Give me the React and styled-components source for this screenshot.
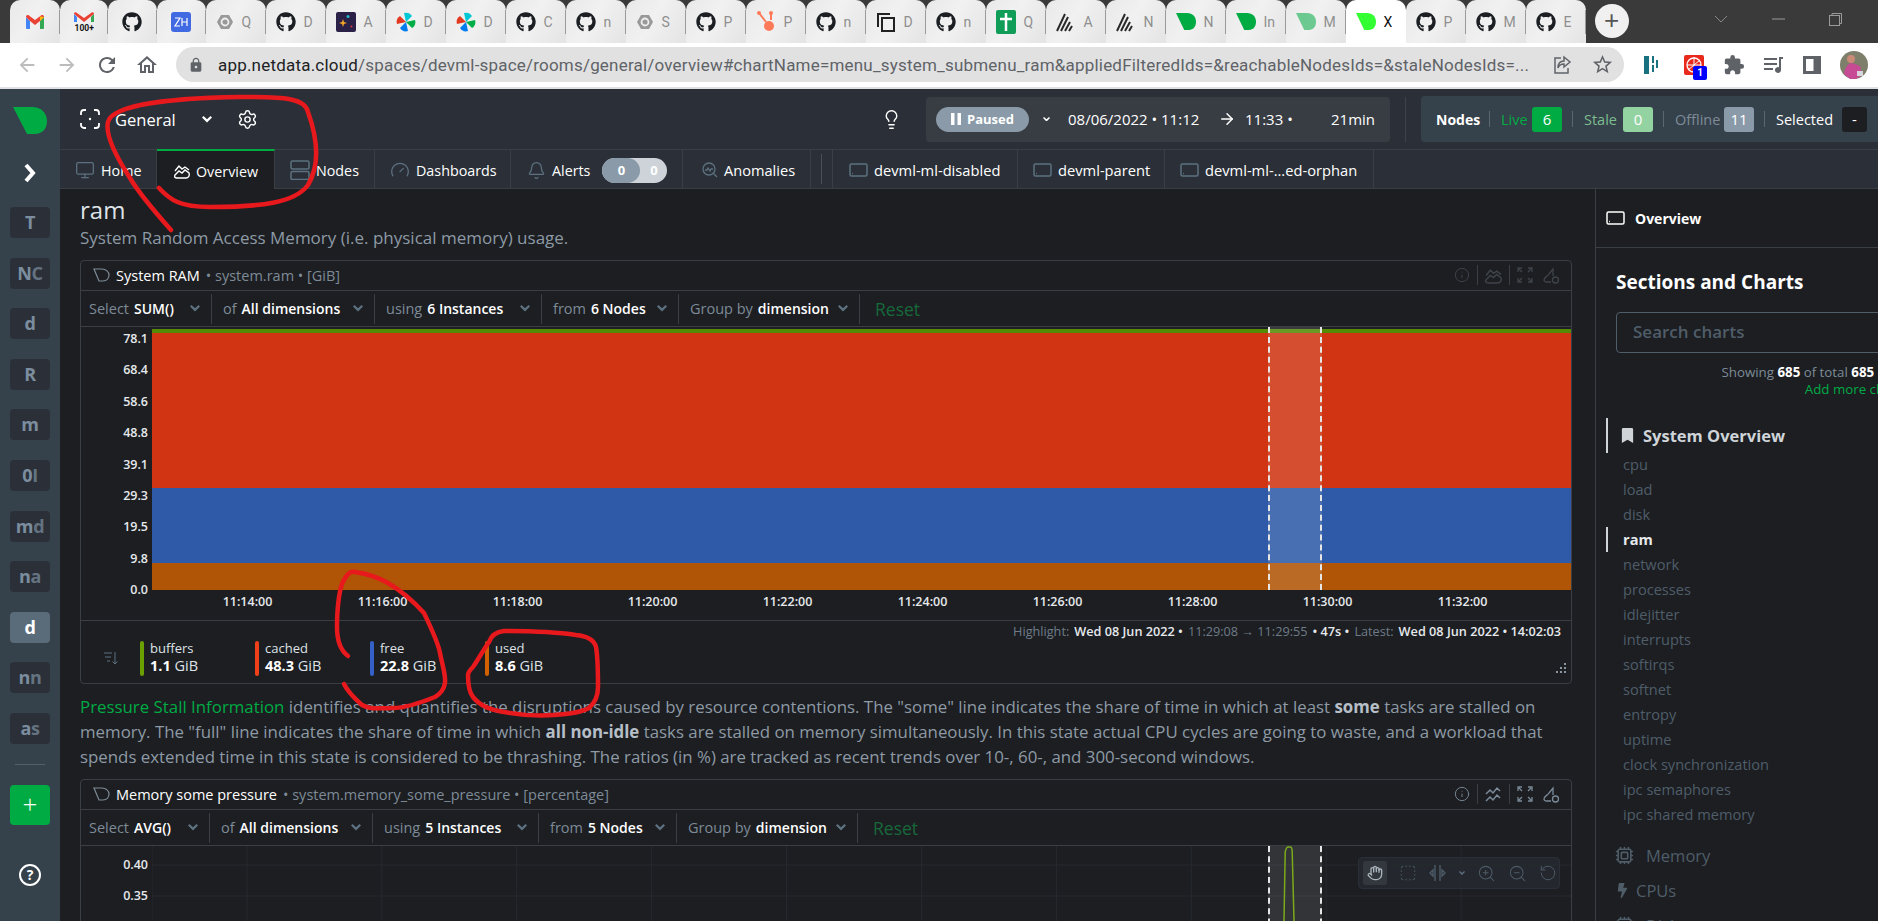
import React from 'react';
import styled, { createGlobalStyle } from 'styled-components';
import { FaGithub, FaBolt, FaBookmark } from 'react-icons/fa';
import { MdArrowBack, MdArrowForward, MdRefresh, MdOutlineHome, MdLock, MdStarBorder, MdExtension } from 'react-icons/md';
import { Monitor, Gauge, Bell, Cpu, Info, ZoomIn, ZoomOut, RotateCcw, Hand, SquareDashed, Settings, Lightbulb, ArrowRight } from 'lucide-react';

const Global = createGlobalStyle`
  html, body { margin: 0; padding: 0; background: #1c1e22; overflow: hidden; }
  * { box-sizing: border-box; }
  body { font-family: "Open Sans", "Liberation Sans", sans-serif; }
`;

const Page = styled.div`
  position: relative;
  width: 100%;
  height: 921px;
  overflow: hidden;
  display: flex;
  flex-direction: column;
`;

/* browser chrome */
const TabStrip = styled.div`
  height: 43px;
  background: #3a3a3a;
  padding-left: 10px;
  display: flex;
  flex-shrink: 0;
`;

const Tab = styled.div`
  width: ${p => p.$w}px;
  height: 43px;
  position: relative;
  border-radius: 10px 10px 0 0;
  background: ${p => (p.$active ? '#ffffff' : 'linear-gradient(120deg, #e9e9e9, #f1f1f1 45%, #e4e4e4)')};
  display: flex;
  align-items: center;
  justify-content: ${p => (p.$small ? 'center' : 'flex-start')};
  padding-left: ${p => (p.$small ? 0 : 10)}px;
  gap: 8px;
  &::after {
    content: '';
    display: ${p => (p.$active ? 'none' : 'block')};
    position: absolute;
    right: 0;
    top: 10px;
    bottom: 9px;
    width: 1px;
    background: #9a9a9a;
  }
`;

const TabLetter = styled.span`
  font-size: 14px;
  color: ${p => (p.$dark ? '#111' : '#8f8f8f')};
  font-family: Roboto, sans-serif;
`;

const NewTab = styled.div`
  width: 34px;
  height: 34px;
  margin: 4px 0 0 9px;
  border-radius: 50%;
  background: #f0f0f0;
  color: #555;
  font-size: 26px;
  line-height: 32px;
  text-align: center;
  font-family: "Liberation Sans", sans-serif;
`;

const WinControls = styled.div`
  margin-left: auto;
  display: flex;
  align-items: center;
  gap: 44px;
  height: 38px;
  padding-right: 36px;
`;

const Toolbar = styled.div`
  height: 46px;
  background: #fff;
  display: flex;
  align-items: center;
  padding: 0 0 1px 7px;
  color: #5f6368;
  flex-shrink: 0;
  border-bottom: 2px solid #dfe1e5;
`;

const NavBtn = styled.div`
  width: 40px;
  display: flex;
  justify-content: center;
  color: ${p => (p.$off ? '#bcbcbc' : '#5f6368')};
  flex-shrink: 0;
`;

const UrlPill = styled.div`
  width: 1448px;
  height: 35px;
  margin-left: 9px;
  border-radius: 18px;
  background: #e1e1e1;
  display: flex;
  align-items: center;
  padding-left: 12px;
  color: #5f6368;
  flex-shrink: 0;
`;

const UrlText = styled.div`
  margin: 0 25px 0 14px;
  width: 1310px;
  white-space: nowrap;
  overflow: hidden;
  font-family: Roboto, sans-serif;
  font-size: 17px;
  letter-spacing: 0.2px;
  color: #5f6368;
  b { font-weight: 400; color: #202124; }
`;

const ExtRow = styled.div`
  display: flex;
  align-items: center;
  flex: 1;
  padding-left: 20px;
  gap: 19px;
`;

const ExtBadge = styled.span`
  position: absolute;
  right: -3px;
  bottom: -5px;
  width: 14px;
  height: 14px;
  background: #0000ff;
  color: #fff;
  font: 700 10px/14px Roboto, sans-serif;
  text-align: center;
  border-radius: 2px;
`;

const ExtWrap = styled.div`
  position: relative;
  width: 20px;
  height: 20px;
  margin-left: 7px;
`;

/* netdata shell */
const Body = styled.div`
  flex: 1;
  display: flex;
  min-height: 0;
`;

const Rail = styled.nav`
  width: 60px;
  background: #35414b;
  display: flex;
  flex-direction: column;
  align-items: center;
  flex-shrink: 0;
  padding-top: 18px;
`;

const Chevron = styled.div`
  margin: 28px 0 23px;
  height: 22px;
`;

const RailTiles = styled.div`
  display: flex;
  flex-direction: column;
  gap: 19.6px;
`;

const RailTile = styled.div`
  width: 40px;
  height: 31px;
  border-radius: 4px;
  background: ${p => (p.$active ? '#5a6b7a' : '#2b3038')};
  color: ${p => (p.$active ? '#fff' : '#7b8d9e')};
  font-weight: 700;
  font-size: 18px;
  line-height: 30px;
  text-align: center;
  letter-spacing: -0.3px;
  i { font-style: normal; opacity: 0.72; }
`;

const RailRule = styled.div`
  width: 30px;
  height: 1px;
  background: #52606c;
  margin: 20px 0;
`;

const AddTile = styled.div`
  width: 40px;
  height: 40px;
  border-radius: 4px;
  background: #00ab44;
  color: #fff;
  font-size: 26px;
  font-weight: 300;
  line-height: 38px;
  text-align: center;
`;

const HelpMark = styled.div`
  margin-top: 39px;
  width: 22px;
  height: 22px;
  border-radius: 50%;
  border: 2px solid #fff;
  color: #fff;
  font-size: 14px;
  font-weight: 700;
  line-height: 18px;
  text-align: center;
`;

const Shell = styled.div`
  flex: 1;
  min-width: 0;
  display: flex;
  flex-direction: column;
`;

const TopBar = styled.header`
  height: 60px;
  background: #2b3038;
  display: flex;
  align-items: center;
  padding-left: 20px;
  color: #fff;
  flex-shrink: 0;
`;

const RoomName = styled.span`
  font-size: 16.5px;
  margin-left: 15px;
  width: 87px;
`;

const GearSlot = styled.span`
  margin-left: 25px;
  display: flex;
`;

const BulbSlot = styled.span`
  margin: 0 24px 0 auto;
  display: flex;
`;

const TimeBox = styled.div`
  width: 464px;
  height: 45px;
  background: #383c43;
  border-radius: 4px;
  display: flex;
  align-items: center;
  padding-left: 10px;
  font-size: 15px;
  color: #fff;
  flex-shrink: 0;
`;

const PausedPill = styled.div`
  width: 93px;
  height: 25px;
  border-radius: 13px;
  background: #8a9aa8;
  display: flex;
  align-items: center;
  justify-content: center;
  gap: 6px;
  font-size: 13px;
  font-weight: 700;
  color: #fff;
`;

const PausedCaret = styled.span`
  margin: 0 18px 0 14px;
  display: flex;
`;

const TimeText = styled.span`
  width: ${p => p.$w}px;
  white-space: nowrap;
  display: flex;
  align-items: center;
`;

const VRule = styled.div`
  width: 1px;
  height: 45px;
  background: #3d434b;
  margin: 0 15px;
  flex-shrink: 0;
`;

const NodesBox = styled.div`
  width: 457px;
  flex-shrink: 0;
  height: 46px;
  background: #35414b;
  border-radius: 4px 0 0 4px;
  display: flex;
  align-items: center;
`;

const NodeGroup = styled.div`
  width: ${p => p.$w}px;
  height: 16px;
  padding: 0 10px 0 ${p => p.$pl || 11}px;
  display: flex;
  align-items: center;
  justify-content: space-between;
  border-right: ${p => (p.$last ? 'none' : '1px solid #5a6672')};
  font-size: ${p => (p.$bold ? 14 : 14.5)}px;
  font-weight: ${p => (p.$bold ? 700 : 400)};
  color: ${p => p.$color || '#fff'};
`;

const NodeCount = styled.span`
  width: ${p => p.$w || 30}px;
  height: 25px;
  border-radius: 3px;
  background: ${p => p.$bg};
  color: #fff;
  font-size: 15px;
  line-height: 24px;
  text-align: center;
  flex-shrink: 0;
`;

const TabBar = styled.div`
  height: 40px;
  background: #2b3038;
  display: flex;
  border-top: 1px solid #3a3f46;
  border-bottom: 1px solid #3a3f46;
  flex-shrink: 0;
`;

const TabItem = styled.div`
  width: ${p => p.$w}px;
  padding: 2px 0 0 ${p => p.$pl || 15}px;
  display: flex;
  align-items: center;
  gap: 6px;
  color: #fff;
  font-size: ${p => p.$fs || 14.3}px;
  white-space: nowrap;
  border-right: 1px solid #3a3f46;
  background: ${p => (p.$active ? '#1c1e22' : 'transparent')};
  border-top: ${p => (p.$active ? '2px solid #00ab44' : 'none')};
  margin-top: ${p => (p.$active ? '-1px' : 0)};
  margin-bottom: ${p => (p.$active ? '-1px' : 0)};
  svg { color: ${p => (p.$active ? '#fff' : '#5d7180')}; flex-shrink: 0; }
`;

const AlertToggle = styled.div`
  margin-left: 6px;
  width: 65px;
  height: 25px;
  border-radius: 13px;
  background: #cdd3d9;
  display: flex;
  font-size: 13px;
  font-weight: 700;
  color: #fff;
`;

const AlertSide = styled.span`
  width: ${p => p.$w}px;
  border-radius: 13px;
  background: ${p => p.$bg || 'transparent'};
  text-align: center;
  line-height: 24px;
`;

const TabDivider = styled.div`
  width: 22px;
  display: flex;
  align-items: center;
  justify-content: center;
  border-right: 1px solid #3a3f46;
  &::before {
    content: '';
    width: 1px;
    height: 30px;
    background: #4a5058;
  }
`;

const Split = styled.div`
  flex: 1;
  min-height: 0;
  display: flex;
`;

const Main = styled.main`
  flex: 1;
  min-width: 0;
  background: #1c1e22;
  padding: 5px 23px 0 20px;
  overflow: hidden;
`;

const SectionTitle = styled.h2`
  margin: 0;
  font-size: 24px;
  line-height: 32px;
  font-weight: 400;
  color: #dfe3e7;
`;

const SectionDesc = styled.p`
  margin: 0 0 10px;
  font-size: 17px;
  line-height: 24px;
  color: #8e9aa5;
`;

const Card = styled.section`
  border: 1px solid #3a3f46;
  border-radius: 4px;
  flex-shrink: 0;
`;

const CardHead = styled.div`
  height: 30px;
  display: flex;
  align-items: center;
  padding: 0 11px 1px 12px;
  border-bottom: 1px solid #3a3f46;
  font-size: 14.5px;
  color: #fff;
  gap: 6px;
`;

const CardMeta = styled.span`
  color: #7e8b97;
  font-size: 14.5px;
`;

const HeadTools = styled.div`
  margin-left: auto;
  display: flex;
  align-items: center;
  gap: 7px;
  color: ${p => (p.$dim ? '#3f444b' : '#7a8a98')};
  svg:last-child { margin-left: 3px; }
`;

const ToolRule = styled.span`
  width: 1px;
  height: 20px;
  background: #3a3f46;
`;

const FilterRow = styled.div`
  height: 36px;
  display: flex;
  align-items: center;
  border-bottom: 1px solid #3a3f46;
`;

const Filter = styled.div`
  width: ${p => p.$w}px;
  height: 30px;
  padding-left: ${p => p.$pl || 11}px;
  display: flex;
  align-items: center;
  gap: 5px;
  border-right: 1px solid #3a3f46;
  font-size: 14.5px;
  color: #7e8b97;
  white-space: nowrap;
  b { color: #fff; font-weight: 600; font-size: 14px; }
  svg { color: #5d7180; margin-left: auto; margin-right: 11px; }
`;

const ResetLink = styled.span`
  margin-left: 15px;
  font-size: 17.5px;
  color: #17693a;
`;

const PlotRow = styled.div`
  display: flex;
  height: ${p => p.$h}px;
  position: relative;
`;

const YAxis = styled.div`
  width: 71px;
  height: ${p => p.$h}px;
  margin-top: ${p => p.$top}px;
  padding-right: 4px;
  display: flex;
  flex-direction: column;
  justify-content: space-between;
  align-items: flex-end;
  font-size: 12.5px;
  line-height: 16px;
  font-weight: 600;
  color: #e6e9ec;
  flex-shrink: 0;
`;

const Stack = styled.div`
  flex: 1;
  padding-top: 2px;
  display: flex;
  flex-direction: column;
`;

const Layer = styled.div`
  height: ${p => p.$h}px;
  background: ${p => p.$c};
`;

const HighlightBand = styled.div`
  position: absolute;
  top: 0;
  bottom: 0;
  left: 1187px;
  width: 54px;
  background: rgba(255, 255, 255, ${p => p.$a});
  border-left: 2px dashed #e6e6e6;
  border-right: 2px dashed #e6e6e6;
`;

const XAxis = styled.div`
  height: 31px;
  padding: 4px 0 0 99px;
  display: flex;
  border-bottom: 1px solid #3a3f46;
`;

const XTick = styled.span`
  width: 135px;
  text-align: center;
  font-size: 12.5px;
  font-weight: 600;
  color: #e6e9ec;
  line-height: 16px;
`;

const CardFoot = styled.div`
  height: 62px;
  position: relative;
`;

const HighlightLine = styled.div`
  height: 19px;
  padding-right: 10px;
  display: flex;
  justify-content: flex-end;
  align-items: center;
  gap: 5px;
  font-size: 12.7px;
  color: #e6e9ec;
  white-space: nowrap;
  font-weight: 600;
  span { color: #6f7c88; font-weight: 400; }
`;

const Legend = styled.div`
  display: flex;
  align-items: center;
  padding-left: 23px;
  height: 36px;
  color: #5d7180;
`;

const LegendItem = styled.div`
  width: 115px;
  display: flex;
  gap: 4px;
  height: 35px;
  line-height: 17px;
  color: #dfe3e7;
  &:first-of-type { margin-left: 21px; }
`;

const LegendText = styled.div`
  margin: -1px 0 0 2px;
  font-size: 13px;
  b { font-weight: 700; color: #fff; }
`;

const LegendValue = styled.span`
  font-size: 14.5px;
`;

const LegendBar = styled.span`
  width: 4px;
  border-radius: 2px;
  background: ${p => p.$c};
`;

const ResizeDots = styled.div`
  position: absolute;
  right: 4px;
  bottom: 4px;
  color: #8a96a1;
`;

const Paragraph = styled.p`
  margin: 10px 0;
  font-size: 16.85px;
  line-height: 25px;
  color: #8e9aa5;
  a { color: #00ab44; }
  b { color: #b6bfc7; }
`;

const ChartTools = styled.div`
  position: absolute;
  top: 11px;
  right: 11px;
  width: 202px;
  height: 32px;
  border: 1px solid #2b3038;
  border-radius: 4px;
  background: rgba(38, 42, 48, 0.85);
  display: flex;
  align-items: center;
  gap: 12px;
  padding-left: 4px;
  color: #4c5a66;
`;

const HandTile = styled.span`
  width: 24px;
  height: 24px;
  border-radius: 3px;
  background: #33383f;
  color: #aab4bc;
  display: flex;
  align-items: center;
  justify-content: center;
`;

/* right panel */
const Side = styled.aside`
  width: 283px;
  flex-shrink: 0;
  background: #1c1e22;
  border-left: 1px solid #3a3f46;
  overflow: hidden;
`;

const SideHead = styled.div`
  height: 59px;
  padding: 0 0 0 10px;
  display: flex;
  align-items: center;
  gap: 10px;
  border-bottom: 1px solid #3a3f46;
  font-size: 14px;
  font-weight: 700;
  color: #fff;
`;

const SideBody = styled.div`
  width: 320px;
  padding: 21px 0 0 20px;
`;

const SideTitle = styled.h3`
  margin: 0 0 17px;
  font-size: 19px;
  line-height: 26px;
  font-weight: 700;
  color: #fff;
`;

const Search = styled.div`
  height: 41px;
  border: 1px solid #4f5d69;
  border-radius: 4px;
  padding: 0 16px;
  font-size: 17px;
  font-weight: 600;
  line-height: 38px;
  color: #4f5d69;
`;

const CountLine = styled.div`
  margin-top: 11px;
  font-size: 13.3px;
  line-height: 17px;
  text-align: right;
  color: #7e8b97;
  white-space: nowrap;
  b { color: #fff; }
`;

const AddMore = styled(CountLine)`
  margin-top: 0;
  padding-right: 8px;
  color: #00ab44;
`;

const NavGroup = styled.div`
  margin: 20px 0 -1px -10px;
  height: 35px;
  border-left: 2px solid #cfd4d9;
  padding-left: 12px;
  display: flex;
  align-items: center;
  gap: 8px;
  font-size: 16.5px;
  font-weight: 700;
  color: #cfd4d9;
`;

const NavList = styled.ul`
  list-style: none;
  margin: 0 0 0 -10px;
  padding: 0;
`;

const NavItem = styled.li`
  height: 25px;
  line-height: 24px;
  padding-left: ${p => (p.$active ? 15 : 17)}px;
  font-size: 14.6px;
  color: ${p => (p.$active ? '#e6e9ec' : '#4f5d69')};
  font-weight: ${p => (p.$active ? 700 : 400)};
  border-left: ${p => (p.$active ? '2px solid #cfd4d9' : 'none')};
`;

const NavSection = styled.div`
  height: 35px;
  margin-top: ${p => p.$mt || 0}px;
  margin-left: -1px;
  display: flex;
  align-items: center;
  gap: ${p => p.$gap || 12}px;
  font-size: 16.5px;
  color: #4f5d69;
`;

const Scribbles = styled.svg`
  position: absolute;
  inset: 0;
  pointer-events: none;
`;

const GmailIcon = () => (
  <svg width="18" height="14" viewBox="0 0 18 14">
    <path d="M0 2v11a1 1 0 0 0 1 1h3V6z" fill="#4285f4" />
    <path d="M18 2v11a1 1 0 0 1-1 1h-3V6z" fill="#34a853" />
    <path d="M0 2l4 4 5 4 5-4 4-4c0-2-2-2.500-3-1.500L9 5 3 .5C2-.5 0 0 0 2z" fill="#ea4335" />
    <path d="M14 1.500l4 .5-4 4z" fill="#fbbc04" />
  </svg>
);

const Gmail100 = () => (
  <svg width="20" height="20" viewBox="0 0 20 20">
    <path d="M0 2l10 8 10-8c0-2-2-2-3-1l-7 5-7-5C2 0 0 0 0 2z" fill="#ea4335" />
    <path d="M0 2v8h3V5z" fill="#4285f4" />
    <path d="M20 2v8h-3V5z" fill="#34a853" />
    <text x="0.500" y="19" fontSize="8.500" fontWeight="700" fontFamily="Roboto" fill="#111">100+</text>
  </svg>
);

const ZhIcon = () => (
  <svg width="20" height="20" viewBox="0 0 20 20">
    <rect width="20" height="20" rx="3" fill="#4169e1" />
    <path d="M4 6h5L4 14h5M11 6v8M16 6v8M11 10h5" stroke="#fff" strokeWidth="1.200" fill="none" />
  </svg>
);

const HexIcon = () => (
  <svg width="18" height="18" viewBox="0 0 18 18">
    <path d="M5 2h8l4 7-4 7H5L1 9z" fill="#999" />
    <circle cx="9" cy="9" r="3.500" fill="none" stroke="#eee" strokeWidth="1.800" />
  </svg>
);

const StarIcon = () => (
  <svg width="20" height="20" viewBox="0 0 20 20">
    <rect width="20" height="20" rx="2" fill="#2b2148" />
    <path d="M7 7l1 3 3 1-3 1-1 3-1-3-3-1 3-1z" fill="#f5a623" />
    <circle cx="12" cy="4.500" r="1.500" fill="#29b6c6" />
    <circle cx="15.500" cy="14.500" r="1" fill="#e53935" />
  </svg>
);

const PinwheelIcon = () => (
  <svg width="20" height="20" viewBox="0 0 20 20">
    <path d="M10 10L8 1q5-1.500 8 3z" fill="#00c7d4" />
    <path d="M10 10L8 1q5-1.500 8 3z" fill="#00ad46" transform="rotate(90 10 10)" />
    <path d="M10 10L8 1q5-1.500 8 3z" fill="#017cee" transform="rotate(180 10 10)" />
    <path d="M10 10L8 1q5-1.500 8 3z" fill="#e43921" transform="rotate(270 10 10)" />
  </svg>
);

const HubspotIcon = () => (
  <svg width="20" height="22" viewBox="0 0 20 22">
    <path d="M3 2l7 9M15 2v7" stroke="#ff7a59" strokeWidth="2" />
    <circle cx="13" cy="15" r="5" fill="#ff7a59" />
    <circle cx="3" cy="2" r="2" fill="#ff7a59" />
    <circle cx="15" cy="2" r="2" fill="#ff7a59" />
  </svg>
);

const CopyIcon = () => (
  <svg width="20" height="20" viewBox="0 0 20 20" fill="none" stroke="#222" strokeWidth="2">
    <path d="M2 15V2h12" />
    <rect x="6" y="6" width="12" height="13" />
  </svg>
);

const SheetIcon = () => (
  <svg width="20" height="24" viewBox="0 0 20 24">
    <rect width="20" height="24" rx="2" fill="#0f9d58" />
    <path d="M10 3v18M4 9h12" stroke="#fff" strokeWidth="2.500" />
  </svg>
);

const SigmaIcon = () => (
  <svg width="20" height="20" viewBox="0 0 20 20" fill="none" stroke="#2a2a2a" strokeWidth="2">
    <path d="M1 19L9 2M5 19l7-14M9 19l5-9M13 19l3-5" />
  </svg>
);

const NetdataLogo = ({ w = 20, h = 17, c = '#00ab44', o = 1 }) => (
  <svg width={w} height={h} viewBox="0 0 34 27" preserveAspectRatio="none" opacity={o}>
    <path d="M0 0h19c9 0 15 6 15 14s-5 13-12 13h-8z" fill={c} />
  </svg>
);

const ChartLogo = () => (
  <svg width="17" height="14" viewBox="0 0 17 14" fill="none" stroke="#7e8b97" strokeWidth="1.200">
    <path d="M1 1h8c4 0 7 3 7 6s-2 6-6 6H6z" />
  </svg>
);

const ServerIcon = () => (
  <svg width="20" height="20" viewBox="0 0 20 20" fill="none" stroke="currentColor" strokeWidth="1.500">
    <rect x="1" y="1" width="18" height="8" rx="1.500" />
    <rect x="1" y="11.500" width="18" height="8" rx="1.500" />
  </svg>
);

const OverviewIcon = ({ size = 16 }) => (
  <svg width={size} height={size} viewBox="0 0 16 16" fill="none" stroke="currentColor" strokeWidth="1.400">
    <path d="M1 8l4-5 3 3 3-2 4 3" />
    <path d="M1 12l4-4 3 2 3-3 4 3c1 3-1 5-3 5H3c-2 0-3-1-2-3z" />
  </svg>
);

const ScreenIcon = ({ c = 'currentColor', w = 19 }) => (
  <svg width={w} height={14} viewBox="0 0 19 14" fill="none" stroke={c} strokeWidth="1.500">
    <rect x="1" y="1" width="17" height="12" rx="1.500" />
    <path d="M3 10.500h.8" />
  </svg>
);

const AnomalyIcon = () => (
  <svg width="16" height="16" viewBox="0 0 16 16" fill="none" stroke="currentColor" strokeWidth="1.300">
    <circle cx="7" cy="7" r="6" />
    <path d="M11.500 11.500L15 15M3 8h2l1-2 2 3 1-2h2" />
  </svg>
);

const MiniChevron = ({ c = '#5d7180', s = 10 }) => (
  <svg width={s} height={s * 0.7} viewBox="0 0 10 7" fill={c}>
    <path d="M0 1.500L1.500 0 5 3.200 8.500 0 10 1.500 5 6.500z" />
  </svg>
);

const RoomIcon = () => (
  <svg width="20" height="20" viewBox="0 0 20 20" fill="none" stroke="#fff" strokeWidth="1.800">
    <path d="M6 1H4a3 3 0 0 0-3 3v2M14 1h2a3 3 0 0 1 3 3v2M6 19H4a3 3 0 0 1-3-3v-2M14 19h2a3 3 0 0 0 3-3v-2" />
    <circle cx="10" cy="10" r="1.200" fill="#fff" stroke="none" />
  </svg>
);

const StackIcon = ({ dim }) => (
  dim ? <OverviewIcon size={17} /> : (
    <svg width="17" height="17" viewBox="0 0 17 17" fill="none" stroke="currentColor" strokeWidth="1.500">
      <path d="M1 8l4-4 3 3 4-5 3 3M1 15l4-4 3 3 4-5 3 3" />
    </svg>
  )
);

const FlameAdd = () => (
  <svg width="17" height="17" viewBox="0 0 17 17" fill="none" stroke="currentColor" strokeWidth="1.300">
    <path d="M8 15H3a2 2 0 0 1-2-2c0-3 3-3 5-6l4-5v7" />
    <circle cx="12.500" cy="13" r="3" />
  </svg>
);

const Expand = () => (
  <svg width="16" height="16" viewBox="0 0 16 16" fill="none" stroke="currentColor" strokeWidth="1.300">
    <path d="M1 5V1h4M11 1h4v4M15 11v4h-4M5 15H1v-4M2 2l3 3M14 2l-3 3M14 14l-3-3M2 14l3-3" />
  </svg>
);

const PanIcon = () => (
  <svg width="18" height="18" viewBox="0 0 18 18" fill="none" stroke="currentColor" strokeWidth="1.400">
    <path d="M6 1v16M11 1v16M1 9l3-3v6zM16 9l-3-3v6z" />
  </svg>
);

const tabs = [
  { w: 49.5, small: true, icon: <GmailIcon /> },
  { w: 48.5, small: true, icon: <Gmail100 /> },
  { w: 48.5, small: true, icon: <FaGithub size={20} color="#1b1f23" /> },
  { w: 49, small: true, icon: <ZhIcon /> },
  { w: 60, icon: <HexIcon />, t: 'Q' },
  { w: 60, icon: <FaGithub size={20} color="#1b1f23" />, t: 'D' },
  { w: 60, icon: <StarIcon />, t: 'A' },
  { w: 60, icon: <PinwheelIcon />, t: 'D' },
  { w: 60, icon: <PinwheelIcon />, t: 'D' },
  { w: 60, icon: <FaGithub size={20} color="#1b1f23" />, t: 'C' },
  { w: 60, icon: <FaGithub size={20} color="#1b1f23" />, t: 'n' },
  { w: 60, icon: <HexIcon />, t: 'S' },
  { w: 60, icon: <FaGithub size={20} color="#1b1f23" />, t: 'P' },
  { w: 60, icon: <HubspotIcon />, t: 'P' },
  { w: 60, icon: <FaGithub size={20} color="#1b1f23" />, t: 'n' },
  { w: 60, icon: <CopyIcon />, t: 'D' },
  { w: 60, icon: <FaGithub size={20} color="#1b1f23" />, t: 'n' },
  { w: 60, icon: <SheetIcon />, t: 'Q' },
  { w: 60, icon: <SigmaIcon />, t: 'A' },
  { w: 60, icon: <SigmaIcon />, t: 'N' },
  { w: 60, icon: <NetdataLogo />, t: 'N' },
  { w: 60, icon: <NetdataLogo c="#00ab44" />, t: 'In' },
  { w: 60, icon: <NetdataLogo o={0.55} />, t: 'M' },
  { w: 60, icon: <NetdataLogo c="#33ff33" />, t: 'X', active: true },
  { w: 60, icon: <FaGithub size={20} color="#1b1f23" />, t: 'P' },
  { w: 60, icon: <FaGithub size={20} color="#1b1f23" />, t: 'M' },
  { w: 60, icon: <FaGithub size={20} color="#1b1f23" />, t: 'E' },
];

const railTiles = ['T', 'NC', 'd', 'R', 'm', '0I', 'md', 'na', 'd', 'nn', 'as'];

const navItems = ['cpu', 'load', 'disk', 'ram', 'network', 'processes', 'idlejitter', 'interrupts', 'softirqs', 'softnet', 'entropy', 'uptime', 'clock synchronization', 'ipc semaphores', 'ipc shared memory'];

const xTicks = ['11:14:00', '11:16:00', '11:18:00', '11:20:00', '11:22:00', '11:24:00', '11:26:00', '11:28:00', '11:30:00', '11:32:00'];

const yTicks = ['78.1', '68.4', '58.6', '48.8', '39.1', '29.3', '19.5', '9.8', '0.0'];

const legend = [
  { name: 'buffers', v: '1.1', c: '#6aa000' },
  { name: 'cached', v: '48.3', c: '#f0401a' },
  { name: 'free', v: '22.8', c: '#3560c8' },
  { name: 'used', v: '8.6', c: '#d06000' },
];

const ChartCard = ({ title, meta, dim, widths, filters, children }) => (
  <Card>
    <CardHead>
      <ChartLogo />
      <span>{title}</span>
      <CardMeta>• {meta}</CardMeta>
      <HeadTools $dim={dim}>
        <Info size={16} strokeWidth={1.4} />
        <ToolRule />
        <StackIcon dim={dim} />
        <ToolRule />
        <Expand />
        <FlameAdd />
      </HeadTools>
    </CardHead>
    <FilterRow>
      {filters.map((f, i) => (
        <Filter key={f[0]} $w={widths[i]} $pl={i === 0 ? 8 : 11}>
          {f[0]} <b>{f[1]}</b>
          <MiniChevron />
        </Filter>
      ))}
      <ResetLink>Reset</ResetLink>
    </FilterRow>
    {children}
  </Card>
);

const App = () => (
  <Page>
    <Global />
    <TabStrip>
      {tabs.map((t, i) => (
        <Tab key={i} $w={t.w} $small={t.small} $active={t.active}>
          {t.icon}
          {t.t && <TabLetter $dark={t.active}>{t.t}</TabLetter>}
        </Tab>
      ))}
      <NewTab>+</NewTab>
      <WinControls>
        <svg width="14" height="8" viewBox="0 0 14 8" fill="none" stroke="#8a8a8a"><path d="M1 1l6 6 6-6" /></svg>
        <svg width="13" height="2" viewBox="0 0 13 2"><path d="M0 1h13" stroke="#9a9a9a" /></svg>
        <svg width="13" height="13" viewBox="0 0 13 13" fill="none" stroke="#9a9a9a"><rect x="0.500" y="2.500" width="10" height="10" /><path d="M3 2.500V.5h9.500v10H10.500" /></svg>
      </WinControls>
    </TabStrip>
    <Toolbar>
      <NavBtn $off><MdArrowBack size={22} /></NavBtn>
      <NavBtn $off><MdArrowForward size={22} /></NavBtn>
      <NavBtn><MdRefresh size={24} /></NavBtn>
      <NavBtn><MdOutlineHome size={24} /></NavBtn>
      <UrlPill>
        <MdLock size={16} />
        <UrlText><b>app.netdata.cloud</b>/spaces/devml-space/rooms/general/overview#chartName=menu_system_submenu_ram&amp;appliedFilteredIds=&amp;reachableNodesIds=&amp;staleNodesIds=...</UrlText>
        <svg width="20" height="20" viewBox="0 0 20 20" fill="none" stroke="#5f6368" strokeWidth="1.500"><path d="M8 3H2v15h13v-5M11 2l6 5-6 5V9c-3 0-5 1-6 4 0-4 2-7 6-7z" /></svg>
        <MdStarBorder size={23} style={{ marginLeft: 18 }} />
      </UrlPill>
      <ExtRow>
        <svg width="14" height="20" viewBox="0 0 14 20" fill="#17717f"><path d="M0 1h5v18H0zM8 1h2v7H8zM8 10h2v7H8zM12 5h2v8h-2z" /></svg>
        <ExtWrap>
          <svg width="20" height="20" viewBox="0 0 20 20"><rect width="20" height="20" rx="2" fill="#e8291c" /><circle cx="10" cy="10" r="7" fill="none" stroke="#fff" strokeWidth="1.300" /><path d="M4 15L16 5M10 2v16M3 10h14" stroke="#fff" /></svg>
          <ExtBadge>1</ExtBadge>
        </ExtWrap>
        <MdExtension size={22} />
        <svg width="20" height="18" viewBox="0 0 20 18" fill="#5f6368"><path d="M0 2h13v2H0zM0 7h13v2H0zM0 12h9v2H0zM15 1h4v2h-2v11a3 3 0 1 1-2-2.800z" /></svg>
        <svg width="18" height="18" viewBox="0 0 18 18" fill="none" stroke="#5f6368" strokeWidth="3"><rect x="1.500" y="1.500" width="15" height="15" /><path d="M13 1v16" strokeWidth="5" /></svg>
        <svg width="28" height="28" viewBox="0 0 28 28"><circle cx="14" cy="14" r="14" fill="#7d7f6a" /><circle cx="11" cy="8" r="4" fill="#c98a78" /><path d="M4 23c1-7 4-11 8-11l8 3 2 9-6 4H10z" fill="#c74a95" /><path d="M17 20h6v5h-6z" fill="#d9d4dc" /></svg>
      </ExtRow>
    </Toolbar>
    <Body>
      <Rail>
        <NetdataLogo w={34} h={27} />
        <Chevron>
          <svg width="14" height="22" viewBox="0 0 14 22" fill="none" stroke="#fff" strokeWidth="4"><path d="M3 3l7 8-7 8" /></svg>
        </Chevron>
        <RailTiles>
          {railTiles.map((t, i) => <RailTile key={i} $active={i === 8}>{t[0]}<i>{t.slice(1)}</i></RailTile>)}
        </RailTiles>
        <RailRule />
        <AddTile>+</AddTile>
        <HelpMark>?</HelpMark>
      </Rail>
      <Shell>
        <TopBar>
          <RoomIcon />
          <RoomName>General</RoomName>
          <MiniChevron c="#fff" s={10} />
          <GearSlot><Settings size={21} strokeWidth={1.6} /></GearSlot>
          <BulbSlot><Lightbulb size={21} strokeWidth={1.6} /></BulbSlot>
          <TimeBox>
            <PausedPill>
              <svg width="10" height="12" viewBox="0 0 10 12" fill="#fff"><path d="M0 0h3.500v12H0zM6.500 0H10v12H6.500z" /></svg>
              Paused
            </PausedPill>
            <PausedCaret><MiniChevron c="#fff" s={7} /></PausedCaret>
            <TimeText $w={150}>08/06/2022 • 11:12</TimeText>
            <TimeText $w={27}><ArrowRight size={18} /></TimeText>
            <TimeText $w={86}>11:33 •</TimeText>
            <TimeText>21min</TimeText>
          </TimeBox>
          <VRule />
          <NodesBox>
            <NodeGroup $w={69} $pl={15} $bold>Nodes</NodeGroup>
            <NodeGroup $w={83} $color="#00ab44">Live<NodeCount $bg="#00ab44">6</NodeCount></NodeGroup>
            <NodeGroup $w={91} $color="#7dbd8e">Stale<NodeCount $bg="#92d3a1">0</NodeCount></NodeGroup>
            <NodeGroup $w={101} $color="#7e8b97">Offline<NodeCount $bg="#8a9aa8">11</NodeCount></NodeGroup>
            <NodeGroup $w={112} $last>Selected<NodeCount $bg="#1c1e22" $w={25}>-</NodeCount></NodeGroup>
          </NodesBox>
        </TopBar>
        <TabBar>
          <TabItem $w={97}><Monitor size={20} strokeWidth={1.5} />Home</TabItem>
          <TabItem $w={118} $active $pl={17}><OverviewIcon />Overview</TabItem>
          <TabItem $w={100}><ServerIcon />Nodes</TabItem>
          <TabItem $w={136}><Gauge size={20} strokeWidth={1.5} />Dashboards</TabItem>
          <TabItem $w={172} $pl={16}><Bell size={19} strokeWidth={1.5} />Alerts
            <AlertToggle><AlertSide $w={38} $bg="#8a9aa8">0</AlertSide><AlertSide $w={27}>0</AlertSide></AlertToggle>
          </TabItem>
          <TabItem $w={128} $pl={19} $fs={14.6}><AnomalyIcon />Anomalies</TabItem>
          <TabDivider />
          <TabItem $w={185} $pl={16} $fs={14.7}><ScreenIcon />devml-ml-disabled</TabItem>
          <TabItem $w={147} $fs={14.7}><ScreenIcon />devml-parent</TabItem>
          <TabItem $w={209} $fs={14.7}><ScreenIcon />devml-ml-...ed-orphan</TabItem>
        </TabBar>
        <Split>
          <Main>
            <SectionTitle>ram</SectionTitle>
            <SectionDesc>System Random Access Memory (i.e. physical memory) usage.</SectionDesc>
            <ChartCard
              title="System RAM"
              meta="system.ram • [GiB]"
              dim
              widths={[131, 163, 167, 137, 181]}
              filters={[['Select', 'SUM()'], ['of', 'All dimensions'], ['using', '6 Instances'], ['from', '6 Nodes'], ['Group by', 'dimension']]}
            >
              <PlotRow $h={263}>
                <YAxis $h={267} $top={4}>
                  {yTicks.map(t => <span key={t}>{t}</span>)}
                </YAxis>
                <Stack>
                  <Layer $h={4} $c="#558a05" />
                  <Layer $h={155} $c="#d03412" />
                  <Layer $h={75} $c="#2f5aa8" />
                  <Layer $h={27} $c="#b05405" />
                </Stack>
                <HighlightBand $a={0.13} />
              </PlotRow>
              <XAxis>
                {xTicks.map(t => <XTick key={t}>{t}</XTick>)}
              </XAxis>
              <CardFoot>
                <HighlightLine>
                  <span>Highlight:</span> Wed 08 Jun 2022 • <span>11:29:08 → 11:29:55</span> • 47s • <span>Latest:</span> Wed 08 Jun 2022 • 14:02:03
                </HighlightLine>
                <Legend>
                  <svg width="15" height="14" viewBox="0 0 15 14" fill="none" stroke="currentColor"><path d="M0 2h8M1 6h6M3 10h3M11 1v12M8.500 10.500L11 13l2.500-2.500" /></svg>
                  {legend.map(l => (
                    <LegendItem key={l.name}>
                      <LegendBar $c={l.c} />
                      <LegendText>{l.name}<br /><LegendValue><b>{l.v}</b> GiB</LegendValue></LegendText>
                    </LegendItem>
                  ))}
                </Legend>
                <ResizeDots>
                  <svg width="12" height="12" viewBox="0 0 12 12" fill="currentColor"><path d="M9 1h2v2H9zM5 5h2v2H5zM9 5h2v2H9zM1 9h2v2H1zM5 9h2v2H5zM9 9h2v2H9z" /></svg>
                </ResizeDots>
              </CardFoot>
            </ChartCard>
            <Paragraph>
              <a>Pressure Stall Information</a> identifies and quantifies the disruptions caused by resource contentions. The "some" line indicates the share of time in which at least <b>some</b> tasks are stalled on memory. The "full" line indicates the share of time in which <b>all non-idle</b> tasks are stalled on memory simultaneously. In this state actual CPU cycles are going to waste, and a workload that spends extended time in this state is considered to be thrashing. The ratios (in %) are tracked as recent trends over 10-, 60-, and 300-second windows.
            </Paragraph>
            <ChartCard
              title="Memory some pressure"
              meta="system.memory_some_pressure • [percentage]"
              widths={[129, 163, 166, 138, 181]}
              filters={[['Select', 'AVG()'], ['of', 'All dimensions'], ['using', '5 Instances'], ['from', '5 Nodes'], ['Group by', 'dimension']]}
            >
              <PlotRow $h={120}>
                <YAxis $h={47} $top={11}>
                  <span>0.40</span>
                  <span>0.35</span>
                </YAxis>
                <svg width="1420" height="120" viewBox="0 0 1420 120" fill="none">
                  <path d="M0 19h1420M0 50h1420" stroke="#26292e" />
                  <path d="M0 0v120M95 0v120M230 0v120M365 0v120M500 0v120M635 0v120M770 0v120M905 0v120M1040 0v120M1175 0v120M1310 0v120" stroke="#26292e" />
                  <path d="M1132 120l2-114q1-5 3-5h2q2 0 2 5l3 114" stroke="#6ea000" strokeWidth="1.500" />
                </svg>
                <HighlightBand $a={0.1} />
                <ChartTools>
                  <HandTile><Hand size={16} /></HandTile>
                  <SquareDashed size={18} strokeWidth={1.3} />
                  <PanIcon />
                  <MiniChevron s={6} />
                  <ZoomIn size={19} strokeWidth={1.3} />
                  <ZoomOut size={19} strokeWidth={1.3} />
                  <RotateCcw size={18} strokeWidth={1.3} />
                </ChartTools>
              </PlotRow>
            </ChartCard>
          </Main>
          <Side>
            <SideHead><ScreenIcon c="#fff" />Overview</SideHead>
            <SideBody>
              <SideTitle>Sections and Charts</SideTitle>
              <Search>Search charts</Search>
              <CountLine>Showing <b>685</b> of total <b>685</b> charts</CountLine>
              <AddMore>Add more charts</AddMore>
              <NavGroup><FaBookmark size={15} />System Overview</NavGroup>
              <NavList>
                {navItems.map(n => <NavItem key={n} $active={n === 'ram'}>{n}</NavItem>)}
              </NavList>
              <NavSection $mt={11}><Cpu size={19} />Memory</NavSection>
              <NavSection $gap={6}><FaBolt size={15} />CPUs</NavSection>
              <NavSection><Cpu size={19} />Disks</NavSection>
            </SideBody>
          </Side>
        </Split>
      </Shell>
    </Body>
    <Scribbles width="1878" height="921" viewBox="0 0 1878 921" fill="none" stroke="#e8191d" strokeWidth="4.500" strokeLinecap="round" strokeLinejoin="round">
      <path d="M171 230C155 212 140 195 130 178C115 155 105 135 108 122C112 105 170 98 240 97C285 97 305 98 308 112C318 140 320 165 308 185C295 203 260 207 210 207C180 207 170 200 159 188" />
      <path d="M348 656C340 650 337 640 337 627C337 605 340 585 344 580C348 572 352 571 355 572C368 574 378 577 388 583C405 593 415 603 424 613C432 630 438 642 440 653C443 668 446 676 445 683C444 690 440 694 435 697C420 703 405 708 393 708C380 708 370 710 362 705C354 698 348 692 344 684" />
      <path d="M489 642C482 652 478 660 473 667C470 670 468 672 468 675C468 685 469 692 473 697C480 706 490 710 504 712C520 715 540 716 554 715C570 714 582 712 589 708C596 702 598 695 598 687C598 672 598 658 596 647C594 640 588 636 576 635C550 631 525 631 504 631C495 632 491 636 489 642Z" />
    </Scribbles>
  </Page>
);

export default App;
